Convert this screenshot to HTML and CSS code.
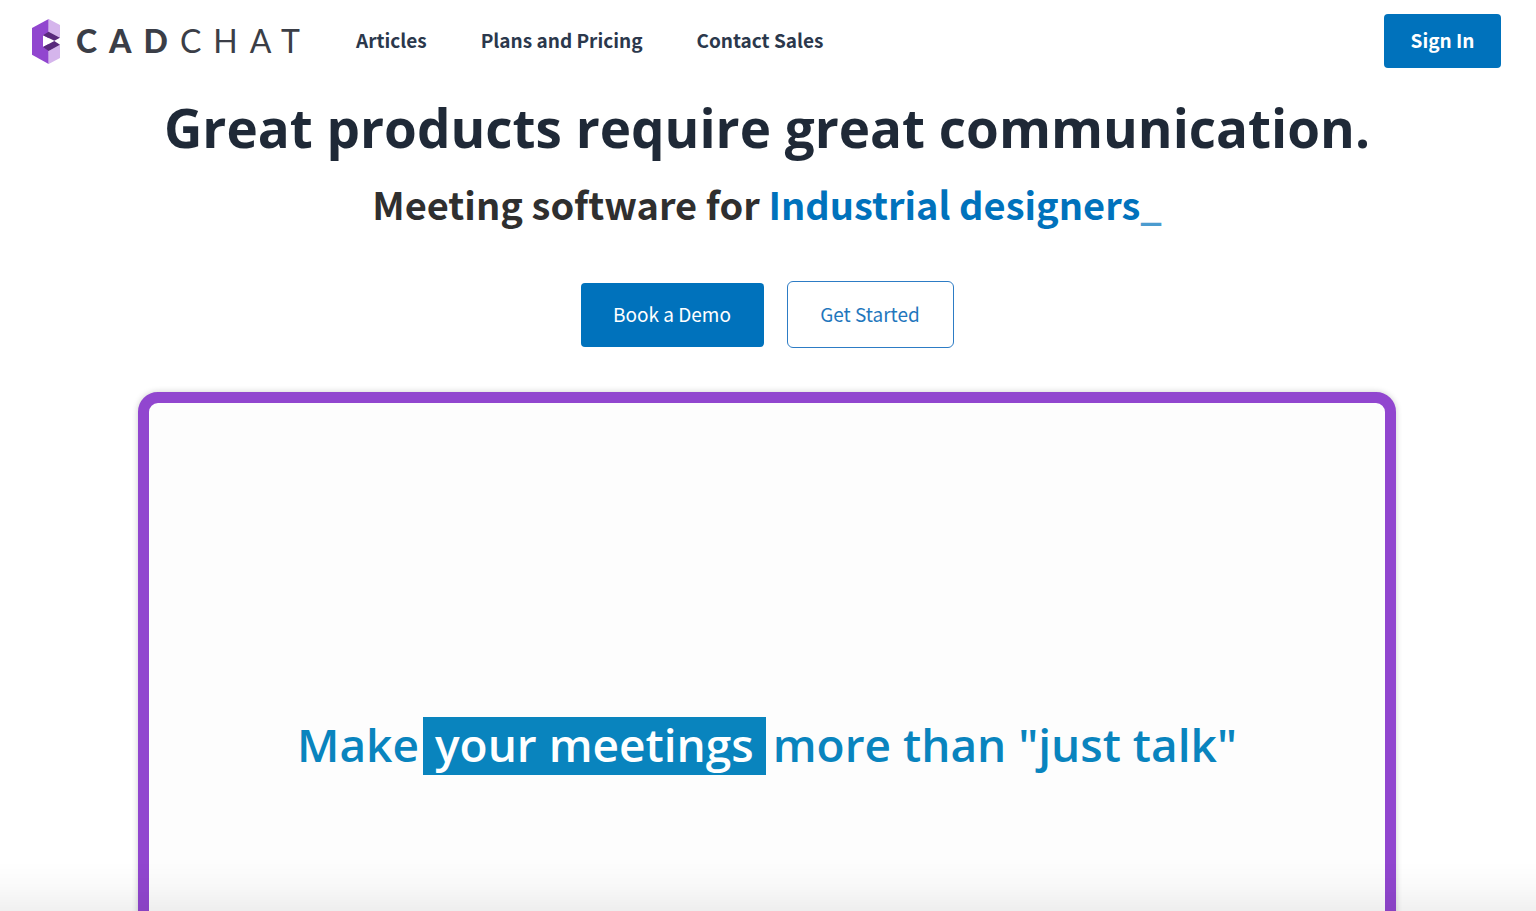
FILE: index.html
```html
<!DOCTYPE html>
<html lang="en">
<head>
  <meta charset="UTF-8">
  <meta name="viewport" content="width=device-width, initial-scale=1.0">
  <title>CADCHAT</title>
  <link rel="stylesheet" href="styles.css">
</head>
<body>
  <header>
    <a class="logo" href="index.html">
      <svg class="logo-mark" viewBox="0 0 84 135" aria-hidden="true">
        <polygon points="0,27 50,0 50,135 0,107" fill="#9146cf"/>
        <polygon points="50,0 84,18 84,56 50,38" fill="#d5b5ec"/>
        <polygon points="50,96 84,77 84,117 50,135" fill="#d5b5ec"/>
        <polygon points="33,49 67,66 33,84" fill="#ffffff"/>
        <polygon points="50,38 84,56 67,65 33,49" fill="#59297c"/>
        <polygon points="67,66 84,77 50,96 33,84" fill="#59297c"/>
      </svg>
      <span class="logo-text"><b>CAD</b><span>CHAT</span></span>
    </a>
    <nav>
      <ul>
        <li><a href="articles.html">Articles</a></li>
        <li><a href="pricing.html">Plans and Pricing</a></li>
        <li><a href="contact.html">Contact Sales</a></li>
      </ul>
    </nav>
    <button class="btn signin" type="button">Sign In</button>
  </header>

  <main>
    <h1>Great products require great communication.</h1>
    <h2>Meeting software for <span class="typed">Industrial designers<span class="cursor">_</span></span></h2>

    <div class="actions">
      <button class="btn demo" type="button">Book a Demo</button>
      <button class="btn start" type="button">Get Started</button>
    </div>

    <div class="video">
      <p>Make<mark>your meetings</mark>more than "just talk"</p>
    </div>
  </main>

  <div class="fade"></div>
</body>
</html>
```
FILE: styles.css
```css
* {
  box-sizing: border-box;
}
body {
  margin: 0;
  height: 100vh;
  overflow: hidden;
  background-color: #fff;
  color: #1f2937;
  font-family: "Noto Sans CJK SC", "Noto Sans", sans-serif;
}
header {
  display: flex;
  align-items: center;
  height: 82px;
  padding: 0 35px 0 32px;
}
.logo {
  display: flex;
  align-items: center;
  gap: 16px;
  width: 324px;
  color: #3b3e47;
  text-decoration: none;
}
.logo-mark {
  width: 28px;
  height: 45px;
}
.logo-text {
  display: flex;
  font-family: Lato, sans-serif;
  font-size: 32px;
  line-height: 40px;
  letter-spacing: 12px;
}
.logo-text b {
  font-weight: 900;
}
nav ul {
  display: flex;
  gap: 54px;
  margin: 0;
  padding: 0 0 3px;
  list-style: none;
}
nav a {
  color: #2b384c;
  font-size: 19px;
  font-weight: bold;
  text-decoration: none;
}
.btn {
  padding: 0 0 3px;
  border: none;
  border-radius: 4px;
  background-color: #0072bc;
  color: #fff;
  font-family: inherit;
  font-size: 19px;
  cursor: pointer;
}
.signin {
  width: 117px;
  height: 54px;
  margin-left: auto;
  font-weight: bold;
}
main {
  padding-right: 2px;
  text-align: center;
}
h1 {
  margin: 10px 0 0;
  font-family: "Open Sans", sans-serif;
  font-size: 53px;
  line-height: 72px;
  white-space: nowrap;
}
h2 {
  margin: 10px 0 0;
  color: #2f2f2f;
  font-size: 38px;
  line-height: 60px;
}
.typed {
  color: #0072bc;
}
.cursor {
  opacity: 0.7;
}
.actions {
  display: flex;
  justify-content: center;
  align-items: center;
  gap: 23px;
  margin-top: 47px;
}
.demo {
  width: 183px;
  height: 64px;
}
.start {
  width: 167px;
  height: 67px;
  border: 1px solid #2d7cc5;
  border-radius: 6px;
  background-color: #fff;
  color: #1f77bd;
}
.video {
  display: flex;
  justify-content: center;
  align-items: center;
  width: 82%;
  aspect-ratio: 16 / 9;
  margin: 44px auto 0;
  border: 11px solid #9146cf;
  border-radius: 20px;
  background-color: #fdfdfd;
  box-shadow: 0 0 6px rgba(0,0,0,0.2);
}
.video p {
  margin: 0;
  color: #0984be;
  font-family: "Open Sans", sans-serif;
  font-size: 46px;
  font-weight: 600;
  line-height: 54px;
  white-space: nowrap;
}
.video mark {
  display: inline-block;
  margin: 0 7px 0 4px;
  padding: 0 12px 4px;
  background-color: #0984be;
  color: #fff;
}
/* soft shade along the bottom of the window */
.fade {
  position: fixed;
  left: 0;
  right: 0;
  bottom: 0;
  height: 50px;
  background: linear-gradient(rgba(0,0,0,0), rgba(0,0,0,0.02) 50%, rgba(0,0,0,0.06));
  pointer-events: none;
}
```
